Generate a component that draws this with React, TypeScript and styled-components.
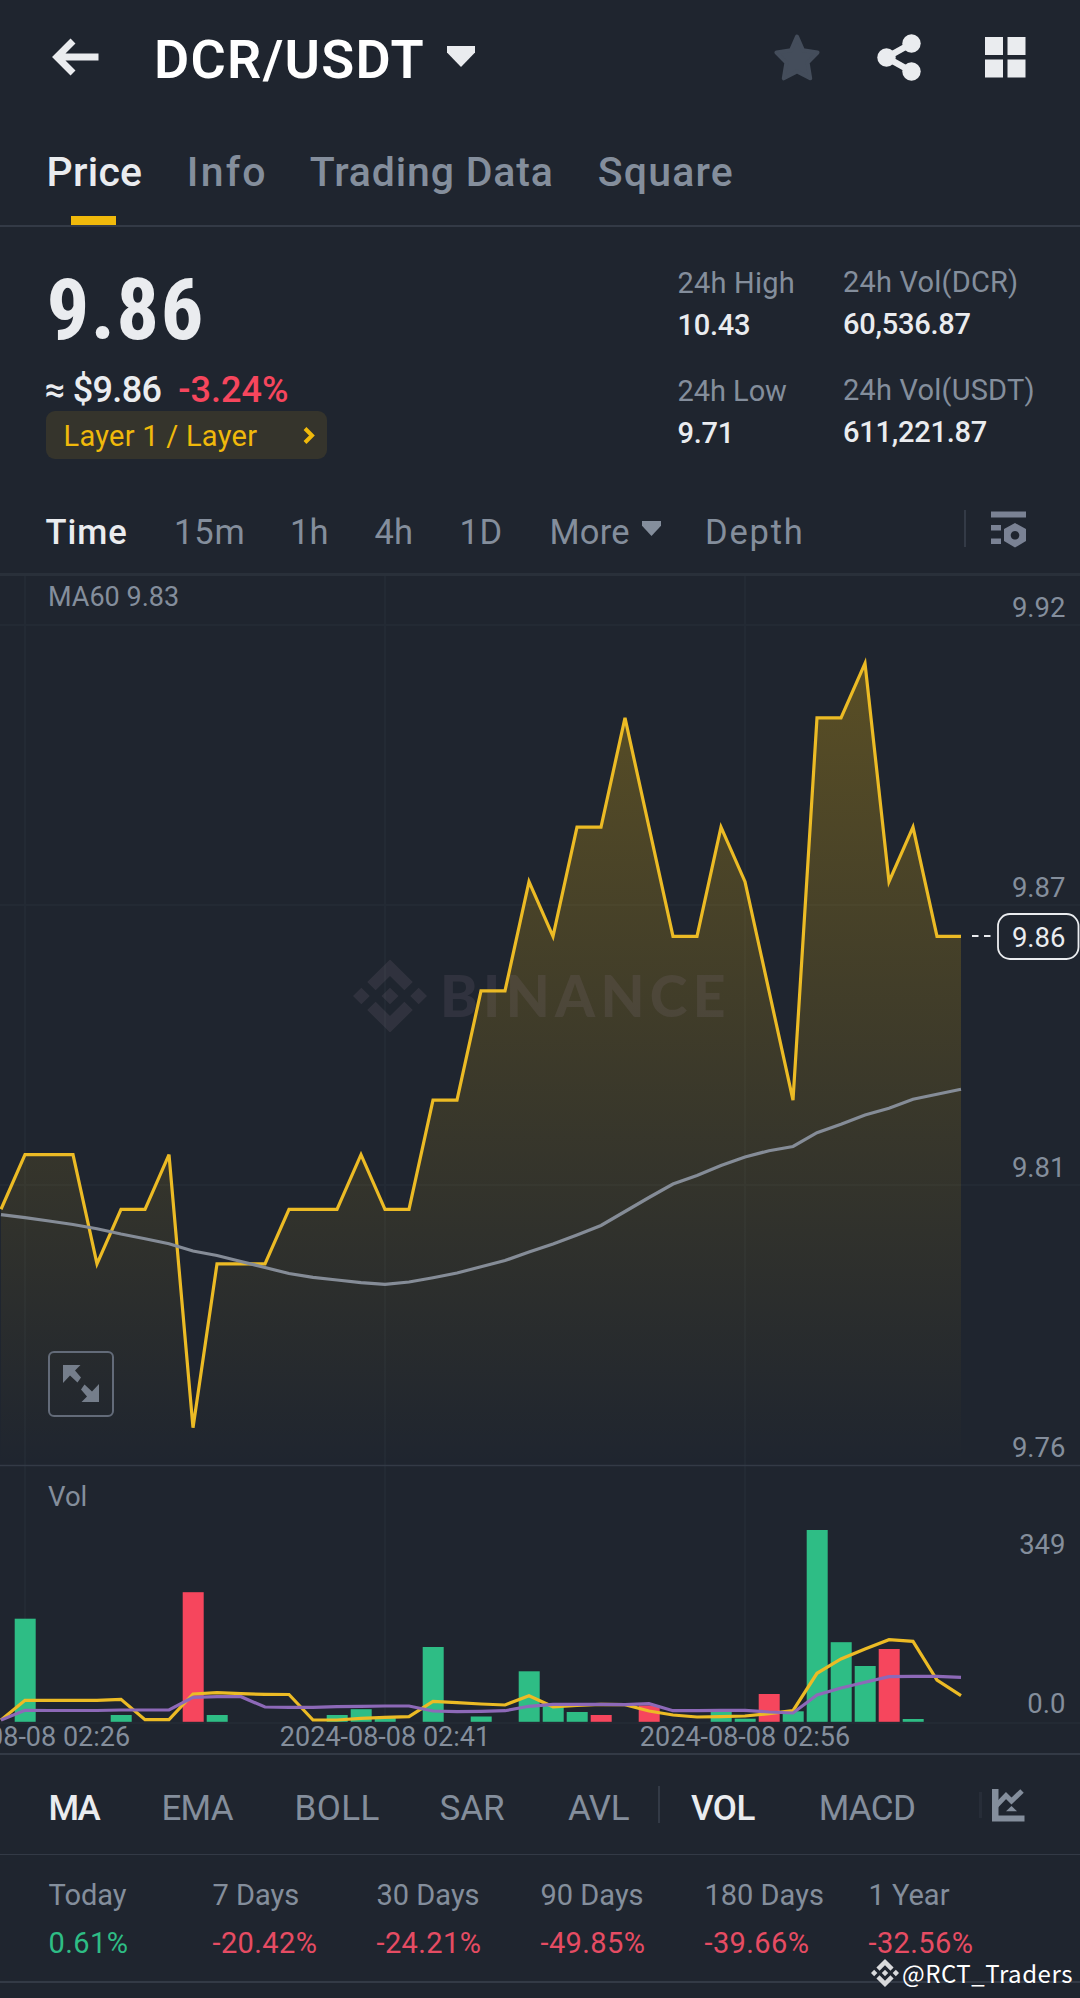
import React from 'react';
import styled, { createGlobalStyle, css } from 'styled-components';

const color = {
  bg: '#1f252f',
  line: '#333a46',
  grid: '#232a34',
  text: '#eaecef',
  muted: '#848e9c',
  yellow: '#f0b90b',
  chartYellow: '#ecbb25',
  green: '#2ebd85',
  red: '#f6465d',
  purple: '#8d69b8',
};

const GlobalStyle = createGlobalStyle`
  *, *::before, *::after { box-sizing: border-box; }
  body {
    margin: 0;
    background: ${color.bg};
    color: ${color.text};
    font-family: Roboto, "Liberation Sans", sans-serif;
  }
  svg { display: block; }
`;

const Screen = styled.main`
  position: relative;
  display: flex;
  flex-direction: column;
  width: 1080px;
  height: 1998px;
  overflow: hidden;
  background: ${color.bg};
  white-space: nowrap;
`;

/* ---------- Header ---------- */

const Header = styled.header`
  display: flex;
  align-items: center;
  height: 114px;
  padding: 0 54px 0 51px;
`;

const Pair = styled.h1`
  display: flex;
  align-items: center;
  gap: 22px;
  margin: 5px auto 0 55px;
  color: #fff;
  font-size: 54px;
  font-weight: 600;
  letter-spacing: 1.3px;
  line-height: 64px;
`;

const Actions = styled.div`
  display: grid;
  grid-template-columns: 103px 108px auto;
  align-items: center;
`;

const ArrowIcon = () => (
  <svg width="48" height="38" viewBox="0 0 48 38" fill="none" stroke={color.text} strokeWidth="7">
    <path d="M5 19H47.5M22 3L6 19L22 35" />
  </svg>
);

const CaretShape = styled.svg<{ $raise: number }>`
  margin-bottom: ${(p) => p.$raise}px;
`;

const Caret = ({ w, h, fill, raise }: { w: number; h: number; fill: string; raise: number }) => (
  <CaretShape $raise={raise} width={w} height={h} viewBox="0 0 28 21" preserveAspectRatio="none" fill={fill}>
    <path d="M0 0H28V6.5L14 21L0 6.5Z" />
  </CaretShape>
);

const StarIcon = () => (
  <svg width="46" height="47" viewBox="0 0 46 47" fill="#444d5b" stroke="#444d5b" strokeWidth="4" strokeLinejoin="round">
    <path d="M23 2.5L29 16.3L43.5 18.5L33.6 28.7L36.2 44.3L23 37.5L9.8 44.3L12.4 28.7L2.5 18.5L17 16.3Z" />
  </svg>
);

const ShareIcon = () => (
  <svg width="44" height="47" viewBox="0 0 44 47" fill={color.text}>
    <path d="M34.5 9.5L9.5 23.5L34.5 37.5" fill="none" stroke={color.text} strokeWidth="6.5" />
    <circle cx="9.5" cy="23.5" r="9.2" />
    <circle cx="34.5" cy="9.5" r="9.2" />
    <circle cx="34.5" cy="37.5" r="9.2" />
  </svg>
);

const GridIcon = () => (
  <svg width="41" height="41" viewBox="0 0 41 41" fill={color.text}>
    <path d="M0 0H18V18H0ZM22.5 0H40.5V18H22.5ZM0 22.5H18V40.5H0ZM22.5 22.5H40.5V40.5H22.5Z" />
  </svg>
);

/* ---------- Tabs ---------- */

const Tabs = styled.nav`
  display: flex;
  height: 113px;
  padding: 33px 0 0 46.5px;
  border-bottom: 2px solid ${color.line};
`;

const Tab = styled.a<{ $active?: boolean; $gap: number; $ls: number }>`
  position: relative;
  margin-right: ${(p) => p.$gap}px;
  color: ${(p) => (p.$active ? color.text : color.muted)};
  font-size: 41px;
  font-weight: 500;
  letter-spacing: ${(p) => p.$ls}px;
  line-height: 50px;
  ${(p) =>
    p.$active &&
    css`
      &::after {
        content: '';
        position: absolute;
        left: 24.5px;
        bottom: 0;
        width: 45px;
        height: 9px;
        background: ${color.yellow};
      }
    `}
`;

/* ---------- Quote ---------- */

const Quote = styled.section`
  display: flex;
  height: 257px;
  padding: 34px 0 0 45.5px;
`;

const PriceColumn = styled.div`
  width: 632px;
  padding-top: 4px;
`;

const LastPrice = styled.div`
  padding-left: 1px;
  height: 91px;
  font-family: "Roboto Condensed", Roboto, sans-serif;
  font-size: 85px;
  font-weight: 700;
  letter-spacing: 1.1px;
  line-height: 91px;
`;

const Change = styled.div`
  display: flex;
  gap: 17px;
  height: 55px;
  padding-top: 11px;
  margin-left: -1px;
  font-size: 36px;
  font-weight: 500;
  line-height: 46px;
`;

const Fiat = styled.span`
  letter-spacing: -0.65px;
`;

const Percent = styled.span`
  color: ${color.red};
`;

const Tag = styled.div`
  display: flex;
  align-items: center;
  justify-content: space-between;
  width: 281px;
  height: 48px;
  padding: 1px 12px 0 18px;
  border-radius: 9px;
  background: #35342c;
  color: ${color.yellow};
  font-size: 29px;
  letter-spacing: 0.27px;
`;

const StatColumn = styled.dl<{ $width: number; $drop: number }>`
  width: ${(p) => p.$width}px;
  margin: ${(p) => p.$drop}px 0 0;
  font-size: 29px;
  line-height: 42px;
`;

const StatLabel = styled.dt<{ $ls?: number }>`
  color: ${color.muted};
  letter-spacing: ${(p) => p.$ls ?? 0.2}px;
  & ~ & {
    margin-top: 24px;
  }
`;

const StatValue = styled.dd`
  margin: 0;
  font-weight: 500;
  letter-spacing: -0.25px;
`;

/* ---------- Option rows (intervals, indicators) ---------- */

const OptionRow = styled.div<{ $columns: string }>`
  display: grid;
  grid-template-columns: ${(p) => p.$columns};
  align-items: center;
`;

const Intervals = styled(OptionRow)`
  height: 92px;
  padding-left: 45.5px;
  border-bottom: 3px solid #29303a;
  font-size: 34.5px;
`;

const Indicators = styled(OptionRow)`
  height: 102px;
  padding-left: 48.5px;
  border-top: 2px solid ${color.line};
  border-bottom: 1px solid ${color.line};
  font-size: 35px;
`;

const Option = styled.span<{ $active?: boolean; $ls?: number; $drop?: number }>`
  display: flex;
  align-items: center;
  gap: 12px;
  padding-top: ${(p) => p.$drop ?? 6}px;
  color: ${(p) => (p.$active ? color.text : color.muted)};
  font-weight: ${(p) => (p.$active ? 500 : 400)};
  letter-spacing: ${(p) => p.$ls ?? 0}px;
`;

const Divider = styled.i<{ $faint?: boolean }>`
  width: ${(p) => (p.$faint ? 3 : 2)}px;
  height: ${(p) => (p.$faint ? 26 : 37)}px;
  background: ${(p) => (p.$faint ? '#272d38' : color.line)};
`;

const SettingsIcon = () => (
  <svg width="36" height="38" viewBox="0 0 36 38" fill="#7a8294">
    <path d="M0 1.5H35V7.5H0ZM0 15H10V20.5H0ZM0 28.5H10V34H0Z" />
    <path fillRule="evenodd" d="M24 13L35 19V31L24 37.5L13 31V19ZM24 21a4.3 4.3 0 1 0 0.01 0Z" />
  </svg>
);

const ChartIcon = () => (
  <svg width="33" height="35" viewBox="0 -2 33 35" fill={color.muted}>
    <path d="M0 0H6.5V26.5H32.5V32.5H0Z" />
    <path d="M4 17L14 6.5L19.5 12L30 2" fill="none" stroke={color.muted} strokeWidth="5" />
    <path d="M19.5 17L25 22.3H14Z" />
  </svg>
);

/* ---------- Chart ---------- */

const ChartArea = styled.section`
  position: relative;
  height: 1177px;
`;

const AxisText = styled.text<{ $size?: number; $bright?: boolean }>`
  fill: ${(p) => (p.$bright ? color.text : color.muted)};
  font-size: ${(p) => p.$size ?? 27.5}px;
`;

const Watermark = styled.text`
  fill: #8c7a8c;
  font-family: Lato, sans-serif;
  font-size: 57px;
  font-weight: 900;
  letter-spacing: 5.3px;
`;

const ExpandButton = styled.button`
  position: absolute;
  left: 48px;
  top: 774.5px;
  display: flex;
  align-items: center;
  justify-content: center;
  width: 66px;
  height: 66px;
  padding: 0;
  border: 2px solid #636b79;
  border-radius: 6px;
  background: transparent;
`;

const STEP = 24;
const xAt = (i: number) => 1 + i * STEP;
const priceY = (p: number) => 936.3 + (9.86 - p) * 5460;

const prices = [
  9.81, 9.82, 9.82, 9.82, 9.8, 9.81, 9.81, 9.82, 9.77, 9.8, 9.8, 9.8, 9.81, 9.81, 9.81, 9.82, 9.81, 9.81, 9.83, 9.83,
  9.85, 9.85, 9.87, 9.86, 9.88, 9.88, 9.9, 9.88, 9.86, 9.86, 9.88, 9.87, 9.85, 9.83, 9.9, 9.9, 9.91, 9.87, 9.88, 9.86,
  9.86,
];

const ma60 = [
  1214.7, 1217.7, 1221, 1224.5, 1228.7, 1234, 1238.7, 1243.7, 1251, 1255.5, 1261.5, 1267.5, 1273.5, 1277.3, 1280,
  1282.6, 1284.3, 1282, 1277.7, 1273, 1266.7, 1260.5, 1252, 1244, 1235, 1225.5, 1211.5, 1197.5, 1184, 1175.5, 1165.5,
  1157, 1150.7, 1146.5, 1132.7, 1124.3, 1115, 1108.3, 1099.3, 1094.3, 1089.3,
];

const volMa5 = [
  1720, 1700.3, 1700.3, 1700.3, 1700.3, 1699.3, 1719.6, 1719.6, 1694, 1692.7, 1693.7, 1694.3, 1694.5, 1720, 1720,
  1718.3, 1717.3, 1716.6, 1701.3, 1702.7, 1704, 1705, 1695.7, 1706.8, 1705.3, 1704.3, 1704.7, 1711, 1715, 1717, 1716.6,
  1716, 1713.7, 1710.7, 1673.3, 1659, 1649, 1639.7, 1641.3, 1680, 1695.7,
];

const volMa10 = [
  1720, 1710.3, 1710.5, 1710.5, 1710.5, 1710, 1710, 1710, 1697.3, 1696.7, 1696.7, 1707, 1707.3, 1707.3, 1706.7, 1706.3,
  1706, 1706, 1711, 1711.7, 1711.3, 1710.7, 1706.3, 1704.3, 1704.3, 1704.3, 1704.7, 1703.7, 1710.7, 1710.7, 1710.3,
  1710.3, 1712, 1713, 1695, 1688, 1682.3, 1676.7, 1676.3, 1676.3, 1677.3,
];

/* candle index, top edge, rising or falling */
const volumes: [number, number, 'up' | 'down'][] = [
  [1, 1618.7, 'up'], [5, 1715, 'up'], [8, 1592.2, 'down'], [9, 1715, 'up'], [14, 1715, 'up'], [15, 1709.2, 'up'],
  [16, 1717.2, 'up'], [18, 1647, 'up'], [20, 1716.5, 'up'], [22, 1671.3, 'up'], [23, 1705.5, 'up'], [24, 1712, 'up'],
  [25, 1715, 'down'], [27, 1705.5, 'down'], [30, 1712, 'up'], [31, 1718.7, 'up'], [32, 1694, 'down'],
  [33, 1711.3, 'up'], [34, 1530, 'up'], [35, 1642.2, 'up'], [36, 1666, 'up'], [37, 1649, 'down'], [38, 1719, 'up'],
];

const VOL_BASE = 1721.8;
const toPoints = (ys: number[]) => ys.map((y, i) => `${xAt(i)},${y.toFixed(1)}`).join(' ');

const BINANCE_MARK =
  'M38.7 53.2L63.3 28.6L87.9 53.2L102.2 38.9L63.3 0L24.4 38.9ZM0 63.3L14.3 49L28.6 63.3L14.3 77.6ZM38.7 73.4L63.3 98L87.9 73.4L102.2 87.7L63.3 126.6L24.4 87.7ZM98 63.3L112.3 49L126.6 63.3L112.3 77.6ZM77.8 63.3L63.3 48.8L48.8 63.3L63.3 77.8Z';

const PriceChart = () => {
  const line = toPoints(prices.map(priceY));
  return (
    <svg width="1080" height="1177" viewBox="0 576 1080 1177">
      <defs>
        <linearGradient id="area" gradientUnits="userSpaceOnUse" x1="0" x2="0" y1="663" y2="1465">
          <stop offset="0" stopColor={color.yellow} stopOpacity="0.28" />
          <stop offset="1" stopColor={color.yellow} stopOpacity="0" />
        </linearGradient>
      </defs>

      <g stroke={color.grid} strokeWidth="2">
        {[25, 385, 745].map((x) => (
          <path key={x} d={`M${x} 576V1722`} />
        ))}
        {[625, 905, 1185, 1723].map((y) => (
          <path key={y} d={`M0 ${y}H1080`} />
        ))}
      </g>
      <path d="M0 1465.5H1080" stroke={color.line} strokeWidth="1.5" />

      <polygon points={`1,1465 ${line} 961,1465`} fill="url(#area)" />

      <g opacity="0.16">
        <svg x="353" y="959.5" width="74" height="73" viewBox="0 0 126.6 126.6" preserveAspectRatio="none">
          <path d={BINANCE_MARK} fill="#8c7a8c" />
        </svg>
        <Watermark x="440" y="1016.5">BINANCE</Watermark>
      </g>

      <polyline points={line} fill="none" stroke={color.chartYellow} strokeWidth="3.2" />
      <polyline points={toPoints(ma60)} fill="none" stroke="#858c97" strokeWidth="3.2" />

      {volumes.map(([i, top, dir]) => (
        <rect
          key={i}
          x={xAt(i) - 10.3}
          y={top}
          width="21"
          height={VOL_BASE - top}
          fill={dir === 'up' ? color.green : color.red}
        />
      ))}
      <polyline points={toPoints(volMa5)} fill="none" stroke={color.chartYellow} strokeWidth="3.2" />
      <polyline points={toPoints(volMa10)} fill="none" stroke={color.purple} strokeWidth="3.2" />

      <AxisText x="48" y="606" $size={27}>MA60 9.83</AxisText>
      <AxisText x="48" y="1506">Vol</AxisText>
      <g textAnchor="end">
        <AxisText x="1065.5" y="617">9.92</AxisText>
        <AxisText x="1065.5" y="897">9.87</AxisText>
        <AxisText x="1065.5" y="1177">9.81</AxisText>
        <AxisText x="1065.5" y="1457">9.76</AxisText>
        <AxisText x="1065.5" y="1554">349</AxisText>
        <AxisText x="1065.5" y="1713">0.0</AxisText>
      </g>
      <g textAnchor="middle">
        <AxisText x="25" y="1746" $size={27}>2024-08-08 02:26</AxisText>
        <AxisText x="385" y="1746" $size={27}>2024-08-08 02:41</AxisText>
        <AxisText x="745" y="1746" $size={27}>2024-08-08 02:56</AxisText>
      </g>

      <path d="M972 936H978.5M984 936H990.5" stroke={color.text} strokeWidth="1.8" />
      <rect x="998" y="914" width="80.5" height="45" rx="12" fill={color.bg} stroke={color.text} strokeWidth="1.8" />
      <AxisText x="1065.5" y="947" textAnchor="end" $bright>9.86</AxisText>
    </svg>
  );
};

/* ---------- Performance ---------- */

const Performance = styled.section`
  display: grid;
  grid-template-columns: repeat(6, 164px);
  height: 128px;
  padding: 19px 0 0 48.5px;
  border-bottom: 2px solid ${color.line};
  font-size: 29px;
`;

const Period = styled.div`
  color: ${color.muted};
  line-height: 42px;
`;

const Return = styled.div<{ $up?: boolean }>`
  padding-top: 6px;
  color: ${(p) => (p.$up ? color.green : '#e64c63')};
  letter-spacing: 0.4px;
  line-height: 43px;
`;

const Credit = styled.div`
  position: absolute;
  right: 7px;
  bottom: 7px;
  display: flex;
  align-items: center;
  gap: 3px;
  color: #fff;
  font-family: "Noto Sans CJK SC", sans-serif;
  font-size: 24px;
  letter-spacing: 0.55px;
  line-height: 36px;
`;

const returns = [
  ['Today', '0.61%'],
  ['7 Days', '-20.42%'],
  ['30 Days', '-24.21%'],
  ['90 Days', '-49.85%'],
  ['180 Days', '-39.66%'],
  ['1 Year', '-32.56%'],
];

export default function App() {
  return (
    <Screen>
      <GlobalStyle />
      <Header>
        <ArrowIcon />
        <Pair>
          DCR/USDT
          <Caret w={28} h={21} fill={color.text} raise={6} />
        </Pair>
        <Actions>
          <StarIcon />
          <ShareIcon />
          <GridIcon />
        </Actions>
      </Header>

      <Tabs>
        <Tab $active $gap={44.5} $ls={0.27}>Price</Tab>
        <Tab $gap={42} $ls={2.2}>Info</Tab>
        <Tab $gap={44} $ls={0.84}>Trading Data</Tab>
        <Tab $gap={0} $ls={1.19}>Square</Tab>
      </Tabs>

      <Quote>
        <PriceColumn>
          <LastPrice>9.86</LastPrice>
          <Change>
            <Fiat>≈ $9.86</Fiat>
            <Percent>-3.24%</Percent>
          </Change>
          <Tag>
            Layer 1 / Layer
            <svg width="12" height="17" viewBox="0 0 12 17" fill="none" stroke={color.yellow} strokeWidth="4">
              <path d="M2 1.5L9 8.5L2 15.5" />
            </svg>
          </Tag>
        </PriceColumn>
        <StatColumn $width={165.5} $drop={1}>
          <StatLabel>24h High</StatLabel>
          <StatValue>10.43</StatValue>
          <StatLabel $ls={-0.05}>24h Low</StatLabel>
          <StatValue>9.71</StatValue>
        </StatColumn>
        <StatColumn $width={200} $drop={0}>
          <StatLabel>24h Vol(DCR)</StatLabel>
          <StatValue>60,536.87</StatValue>
          <StatLabel>24h Vol(USDT)</StatLabel>
          <StatValue>611,221.87</StatValue>
        </StatColumn>
      </Quote>

      <Intervals $columns="128.5px 116px 84.5px 85px 90px 155.5px 258.5px 27.5px auto">
        <Option $active $ls={1}>Time</Option>
        <Option $ls={0.86}>15m</Option>
        <Option>1h</Option>
        <Option>4h</Option>
        <Option $ls={0.6}>1D</Option>
        <Option $ls={0.2}>
          More
          <Caret w={19} h={15} fill={color.muted} raise={7} />
        </Option>
        <Option $ls={1.8}>Depth</Option>
        <Divider />
        <SettingsIcon />
      </Intervals>

      <ChartArea>
        <PriceChart />
        <ExpandButton aria-label="Expand chart">
          <svg width="36" height="37" viewBox="0 0 36 37" fill="#757e8b">
            <path d="M0 0H17.5L12 5.5L18 12.5L14.5 17.5L7 10.5L0 18Z" />
            <path d="M36 37H18.5L24 31.5L18 24.5L21.5 19.5L29 26.5L36 19Z" />
          </svg>
        </ExpandButton>
      </ChartArea>

      <Indicators $columns="113px 133px 145px 128.5px 90px 33px 127.7px 160.3px 13px auto">
        <Option $active $ls={-2} $drop={7}>MA</Option>
        <Option $ls={-0.8} $drop={7}>EMA</Option>
        <Option $ls={0.4} $drop={7}>BOLL</Option>
        <Option $drop={7}>SAR</Option>
        <Option $ls={-0.5} $drop={7}>AVL</Option>
        <Divider />
        <Option $active $ls={-0.5} $drop={7}>VOL</Option>
        <Option $ls={-0.7} $drop={7}>MACD</Option>
        <Divider $faint />
        <ChartIcon />
      </Indicators>

      <Performance>
        {returns.map(([period, value]) => (
          <div key={period}>
            <Period>{period}</Period>
            <Return $up={!value.startsWith('-')}>{value}</Return>
          </div>
        ))}
      </Performance>

      <Credit>
        <svg width="28" height="28" viewBox="0 0 126.6 126.6" fill="#d9dadc">
          <path d={BINANCE_MARK} />
        </svg>
        @RCT_Traders
      </Credit>
    </Screen>
  );
}
